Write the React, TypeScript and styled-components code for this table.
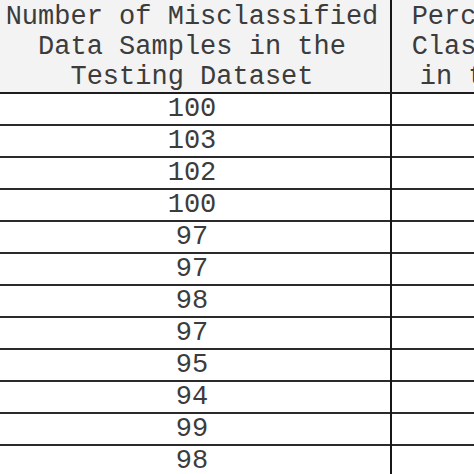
import styled, { createGlobalStyle } from 'styled-components'

const GlobalStyle = createGlobalStyle`
  html, body {
    margin: 0;
    padding: 0;
    background: #ffffff;
    overflow: hidden;
  }
`

const Frame = styled.div`
  width: 474px;
  height: 474px;
  overflow: hidden;
`

const Table = styled.table`
  border-collapse: collapse;
  table-layout: fixed;
  width: 804px;
  font-family: 'Liberation Mono', 'Courier New', monospace;
  font-size: 27px;
  color: #3c3c3c;
`

const HeadCell = styled.th<{ $width: number }>`
  width: ${({ $width }) => $width}px;
  height: 91px;
  padding: 1px 0 0;
  background: #f3f3f3;
  font-weight: normal;
  line-height: 30px;
  text-align: center;
  vertical-align: middle;
  white-space: nowrap;
  border-bottom: 2px solid #1e1e1e;
  &:first-child {
    padding-right: 6px;
  }
  & + & {
    border-left: 2px solid #161616;
  }
`

const Row = styled.tr`
  & + & > td {
    border-top: 2px solid #2a2a2a;
  }
`

const Cell = styled.td`
  height: 30px;
  padding: 0;
  line-height: 30px;
  text-align: center;
  &:first-child {
    padding-right: 6px;
  }
  & + & {
    border-left: 2px solid #161616;
  }
`

const misclassified = [100, 103, 102, 100, 97, 97, 98, 97, 95, 94, 99, 98]

export default function App() {
  return (
    <>
      <GlobalStyle />
      <Frame>
        <Table>
          <thead>
            <tr>
              <HeadCell $width={384}>
                Number of Misclassified
                <br />
                Data Samples in the
                <br />
                Testing Dataset
              </HeadCell>
              <HeadCell $width={412}>
                Percentage of Correctly
                <br />
                Classified Data Samples
                <br />
                in the Testing Dataset
              </HeadCell>
            </tr>
          </thead>
          <tbody>
            {misclassified.map((count, i) => (
              <Row key={i}>
                <Cell>{count}</Cell>
                <Cell />
              </Row>
            ))}
          </tbody>
        </Table>
      </Frame>
    </>
  )
}
